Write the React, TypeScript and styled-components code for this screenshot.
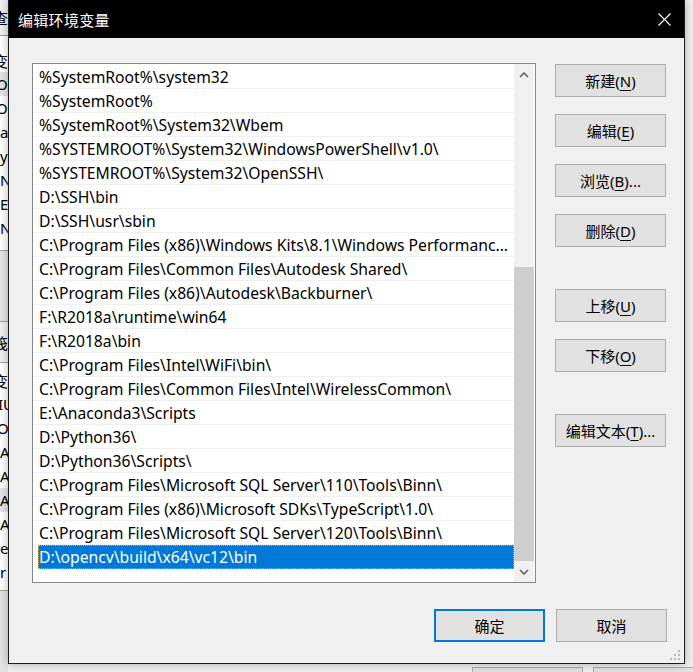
import React from 'react';
import styled, { createGlobalStyle } from 'styled-components';

const UI_FONT = `"Noto Sans", "Noto Sans CJK SC", sans-serif`;

const GlobalStyle = createGlobalStyle`
  html, body {
    margin: 0;
    padding: 0;
  }
  body {
    width: 693px;
    height: 672px;
    overflow: hidden;
    background: #f0f0f0;
    font-family: ${UI_FONT};
  }
`;

const paths = [
  '%SystemRoot%\\system32',
  '%SystemRoot%',
  '%SystemRoot%\\System32\\Wbem',
  '%SYSTEMROOT%\\System32\\WindowsPowerShell\\v1.0\\',
  '%SYSTEMROOT%\\System32\\OpenSSH\\',
  'D:\\SSH\\bin',
  'D:\\SSH\\usr\\sbin',
  'C:\\Program Files (x86)\\Windows Kits\\8.1\\Windows Performanc...',
  'C:\\Program Files\\Common Files\\Autodesk Shared\\',
  'C:\\Program Files (x86)\\Autodesk\\Backburner\\',
  'F:\\R2018a\\runtime\\win64',
  'F:\\R2018a\\bin',
  'C:\\Program Files\\Intel\\WiFi\\bin\\',
  'C:\\Program Files\\Common Files\\Intel\\WirelessCommon\\',
  'E:\\Anaconda3\\Scripts',
  'D:\\Python36\\',
  'D:\\Python36\\Scripts\\',
  'C:\\Program Files\\Microsoft SQL Server\\110\\Tools\\Binn\\',
  'C:\\Program Files (x86)\\Microsoft SDKs\\TypeScript\\1.0\\',
  'C:\\Program Files\\Microsoft SQL Server\\120\\Tools\\Binn\\',
  'D:\\opencv\\build\\x64\\vc12\\bin',
];

const selectedIndex = paths.length - 1;

// fragments of the parent window that peek out on the left
const userVars = [
  { text: '变', indent: -7 },
  { text: 'Or', indent: -4, hover: true },
  { text: 'Or', indent: -4 },
  { text: 'a', indent: 0 },
  { text: 'y', indent: 0 },
  { text: 'N', indent: 0 },
  { text: 'E', indent: 0 },
  { text: 'N', indent: 0 },
];

const systemVars = [
  { text: '变', indent: -7 },
  { text: 'IU', indent: -2 },
  { text: 'OS', indent: -3 },
  { text: 'A', indent: 0 },
  { text: 'A', indent: 0 },
  { text: 'A', indent: 0, hover: true },
  { text: 'A', indent: 0 },
  { text: 'e', indent: 0 },
  { text: 'r', indent: 0 },
];

export default function App() {
  return (
    <>
      <GlobalStyle />
      <Desktop>
        <BackLeft>
          <BackHeader $height={35}>
            <Fragment $indent={-7}>查</Fragment>
          </BackHeader>
          <BackList $height={215} $padTop={12}>
            {userVars.map((v, i) => (
              <BackRow key={i} $hover={v.hover}>
                <Fragment $indent={v.indent}>{v.text}</Fragment>
              </BackRow>
            ))}
          </BackList>
          <BackHeader $height={70} $shade />
          <BackHeader $height={40}>
            <Fragment $indent={-7}>筏</Fragment>
          </BackHeader>
          <BackList $height={228} $padTop={5}>
            {systemVars.map((v, i) => (
              <BackRow key={i} $hover={v.hover}>
                <Fragment $indent={v.indent}>{v.text}</Fragment>
              </BackRow>
            ))}
          </BackList>
          <BackFill />
        </BackLeft>

        <BackMiddle>
          <BackButtonPeek>
            <BackButton />
            <BackButton />
          </BackButtonPeek>
        </BackMiddle>

        <BackRight>
          <BackScrollStub />
          <BackLine $top={150} />
          <BackLine $top={18} />
          <BackBand $height={31} />
          <BackLine $top={18} />
          <BackLine $top={44} />
          <BackScrollStub $tall />
          <BackLine $top={16} />
        </BackRight>

        <Dialog>
          <TitleBar>
            <Title>编辑环境变量</Title>
            <CloseButton aria-label="关闭">
              <svg width="13" height="13" viewBox="0 0 13 13">
                <path d="M0.5 0.5 L12.5 12.5 M12.5 0.5 L0.5 12.5" stroke="#ffffff" strokeWidth="1.1" fill="none" />
              </svg>
            </CloseButton>
          </TitleBar>

          <Body>
            <Content>
              <ListBox>
                <Rows>
                  {paths.map((p, i) => (
                    <Row key={i} $selected={i === selectedIndex}>
                      {p}
                    </Row>
                  ))}
                </Rows>
                <ScrollBar>
                  <ArrowButton>
                    <svg width="10" height="6" viewBox="0 0 10 6">
                      <path d="M1 5 L5 1 L9 5" stroke="#606060" strokeWidth="1.6" fill="none" />
                    </svg>
                  </ArrowButton>
                  <Track>
                    <Thumb />
                  </Track>
                  <ArrowButton>
                    <svg width="10" height="6" viewBox="0 0 10 6">
                      <path d="M1 1 L5 5 L9 1" stroke="#606060" strokeWidth="1.6" fill="none" />
                    </svg>
                  </ArrowButton>
                </ScrollBar>
              </ListBox>

              <ButtonColumn>
                <ButtonGroup>
                  <Button>
                    新建(<u>N</u>)
                  </Button>
                  <Button>
                    编辑(<u>E</u>)
                  </Button>
                  <Button>
                    浏览(<u>B</u>)...
                  </Button>
                  <Button>
                    删除(<u>D</u>)
                  </Button>
                </ButtonGroup>
                <ButtonGroup>
                  <Button>
                    上移(<u>U</u>)
                  </Button>
                  <Button>
                    下移(<u>O</u>)
                  </Button>
                </ButtonGroup>
                <ButtonGroup>
                  <Button>
                    编辑文本(<u>T</u>)...
                  </Button>
                </ButtonGroup>
              </ButtonColumn>
            </Content>

            <Footer>
              <Button $default>确定</Button>
              <Button>取消</Button>
            </Footer>
          </Body>

          <SizeGrip width="12" height="12" viewBox="0 0 12 12">
            <rect x="9" y="0" width="2" height="2" />
            <rect x="5" y="4" width="2" height="2" />
            <rect x="9" y="4" width="2" height="2" />
            <rect x="1" y="8" width="2" height="2" />
            <rect x="5" y="8" width="2" height="2" />
            <rect x="9" y="8" width="2" height="2" />
          </SizeGrip>
        </Dialog>
      </Desktop>
    </>
  );
}

/* ---------- parent window behind the dialog ---------- */

const Desktop = styled.div`
  position: relative;
  width: 693px;
  height: 672px;
  overflow: hidden;
  display: flex;
  background: #f0f0f0;
`;

const BackLeft = styled.div`
  width: 8px;
  flex-shrink: 0;
  display: flex;
  flex-direction: column;
  overflow: hidden;
  background: #ffffff;
`;

const BackHeader = styled.div<{ $height: number; $shade?: boolean }>`
  height: ${({ $height }) => $height}px;
  flex-shrink: 0;
  display: flex;
  align-items: center;
  background: ${({ $shade }) => ($shade ? '#e6e6e6' : '#f0f0f0')};
  border-bottom: 1px solid #a0a0a0;
`;

const BackList = styled.div<{ $height: number; $padTop: number }>`
  height: ${({ $height }) => $height}px;
  flex-shrink: 0;
  box-sizing: border-box;
  padding-top: ${({ $padTop }) => $padTop}px;
  background: #ffffff;
  border-bottom: 1px solid #a0a0a0;
  overflow: hidden;
`;

const BackRow = styled.div<{ $hover?: boolean }>`
  height: 24px;
  display: flex;
  align-items: center;
  background: ${({ $hover }) => ($hover ? '#e5e5e5' : 'transparent')};
`;

const Fragment = styled.span<{ $indent: number }>`
  margin-left: ${({ $indent }) => $indent}px;
  font-family: ${UI_FONT};
  font-size: 15px;
  color: #000000;
  white-space: nowrap;
`;

const BackFill = styled.div`
  flex: 1;
  background: #e3e3e3;
`;

const BackMiddle = styled.div`
  flex: 1;
  display: flex;
  flex-direction: column;
  justify-content: flex-end;
`;

const BackButtonPeek = styled.div`
  height: 5px;
  overflow: hidden;
  display: flex;
  gap: 10px;
  padding-left: 464px;
`;

const BackButton = styled.div`
  width: 111px;
  height: 33px;
  flex-shrink: 0;
  box-sizing: border-box;
  background: #e1e1e1;
  border: 1px solid #adadad;
`;

const BackRight = styled.div`
  width: 8px;
  flex-shrink: 0;
  display: flex;
  flex-direction: column;
  background: #f0f0f0;
`;

const BackScrollStub = styled.div<{ $tall?: boolean }>`
  height: ${({ $tall }) => ($tall ? 200 : 60)}px;
  margin-top: ${({ $tall }) => ($tall ? 0 : 40)}px;
  width: 3px;
  margin-left: 3px;
  background: ${({ $tall }) => ($tall ? '#e8e8e8' : '#e4e4e4')};
`;

const BackLine = styled.div<{ $top: number }>`
  margin-top: ${({ $top }) => $top}px;
  height: 1px;
  background: #a0a0a0;
`;

const BackBand = styled.div<{ $height: number }>`
  height: ${({ $height }) => $height}px;
  background: #dadada;
`;

/* ---------- dialog ---------- */

const Dialog = styled.div`
  position: absolute;
  left: 8px;
  top: 0;
  width: 677px;
  height: 664px;
  box-sizing: border-box;
  display: flex;
  flex-direction: column;
  background: #f0f0f0;
  border: 1px solid #1a1a1a;
  border-top: none;
  box-shadow: 0 0 9px rgba(0, 0, 0, 0.3);
  font-family: ${UI_FONT};
`;

const TitleBar = styled.div`
  height: 38px;
  flex-shrink: 0;
  display: flex;
  align-items: center;
  justify-content: space-between;
  padding-left: 9px;
  background: #000000;
`;

const Title = styled.span`
  font-size: 15px;
  color: #ffffff;
  letter-spacing: 0.3px;
`;

const CloseButton = styled.button`
  width: 40px;
  height: 38px;
  display: flex;
  align-items: center;
  justify-content: center;
  padding: 0;
  border: none;
  background: transparent;
`;

const Body = styled.div`
  flex: 1;
  display: flex;
  flex-direction: column;
  padding: 25px 17px 21px 23px;
`;

const Content = styled.div`
  display: flex;
  gap: 19px;
`;

const ListBox = styled.div`
  width: 504px;
  height: 520px;
  box-sizing: border-box;
  display: flex;
  background: #ffffff;
  border: 1px solid #828790;
`;

const Rows = styled.div`
  flex: 1;
  min-width: 0;
  padding-top: 1px;
  display: flex;
  flex-direction: column;
`;

const Row = styled.div<{ $selected?: boolean }>`
  height: 24px;
  box-sizing: border-box;
  display: flex;
  align-items: center;
  padding: 0 4px 0 ${({ $selected }) => ($selected ? 1 : 6)}px;
  margin-left: ${({ $selected }) => ($selected ? 5 : 0)}px;
  font-size: 15.7px;
  white-space: nowrap;
  overflow: hidden;
  color: ${({ $selected }) => ($selected ? '#ffffff' : '#000000')};
  background: ${({ $selected }) => ($selected ? '#0078d7' : 'transparent')};
  border-bottom: 1px solid ${({ $selected }) => ($selected ? 'transparent' : '#f0f0f0')};
  outline: ${({ $selected }) => ($selected ? '1px dotted #f5a34a' : 'none')};
  outline-offset: -1px;
`;

const ScrollBar = styled.div`
  width: 20px;
  flex-shrink: 0;
  display: flex;
  flex-direction: column;
  background: #f0f0f0;
  border-right: 1px solid #ffffff;
`;

const ArrowButton = styled.div`
  height: 21px;
  flex-shrink: 0;
  display: flex;
  align-items: center;
  justify-content: center;
`;

const Track = styled.div`
  flex: 1;
  display: flex;
  flex-direction: column;
  justify-content: flex-end;
`;

const Thumb = styled.div`
  height: 294px;
  background: #cdcdcd;
`;

const ButtonColumn = styled.div`
  display: flex;
  flex-direction: column;
  gap: 42px;
  padding-top: 1px;
`;

const ButtonGroup = styled.div`
  display: flex;
  flex-direction: column;
  gap: 17px;
`;

const Button = styled.button<{ $default?: boolean }>`
  width: 111px;
  height: 33px;
  box-sizing: border-box;
  display: flex;
  align-items: center;
  justify-content: center;
  padding: 0;
  font-family: ${UI_FONT};
  font-size: 15px;
  color: #000000;
  background: #e1e1e1;
  border: ${({ $default }) => ($default ? '2px solid #0078d7' : '1px solid #adadad')};

  u {
    text-underline-offset: 3px;
  }
`;

const Footer = styled.div`
  margin-top: auto;
  display: flex;
  justify-content: flex-end;
  gap: 11px;
`;

const SizeGrip = styled.svg`
  position: absolute;
  right: 3px;
  bottom: 1px;
  fill: #b8b8b8;
`;
